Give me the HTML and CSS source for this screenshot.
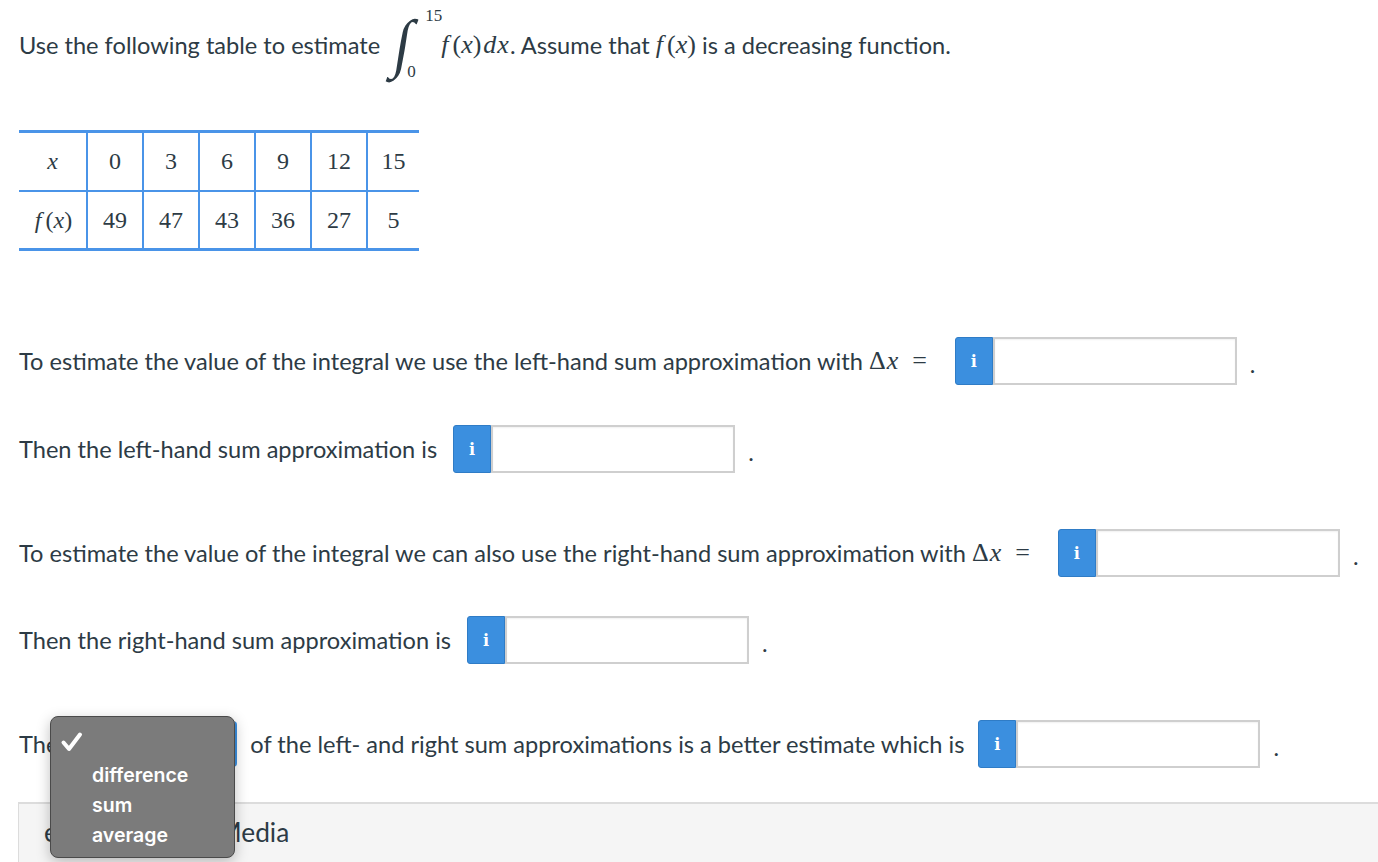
FILE: index.html
```html
<!DOCTYPE html>
<html>
<head>
<meta charset="utf-8">
<link rel="stylesheet" href="styles.css">
</head>
<body>
<div class="page">
  <div class="head">
    <span>Use the following table to estimate</span>
    <span class="intg">
      <span class="intsign">∫</span>
      <span class="up">15</span>
      <span class="lo">0</span>
    </span>
    <span class="m"><i class="fi">f</i>(<i>x</i>)<i class="d">dx</i></span><span>. Assume that</span><span class="m m2"><i class="fi">f</i>(<i>x</i>)</span><span>&nbsp;is a decreasing function.</span>
  </div>

  <table class="tbl">
    <tr><td class="c0"><i>x</i></td><td>0</td><td>3</td><td>6</td><td>9</td><td>12</td><td class="cl">15</td></tr>
    <tr><td class="c0"><i class="fi">f</i>(<i>x</i>)</td><td>49</td><td>47</td><td>43</td><td>36</td><td>27</td><td class="cl">5</td></tr>
  </table>

  <div class="row r1">
    <span>To estimate the value of the integral we use the left-hand sum approximation with</span><span class="m dx">Δ<i>x</i><span class="eq">=</span></span>
    <span class="ig"><span class="ib">i</span><span class="inp"></span></span><span class="dot">.</span>
  </div>
  <div class="row r2">
    <span>Then the left-hand sum approximation is</span>
    <span class="ig"><span class="ib">i</span><span class="inp"></span></span><span class="dot">.</span>
  </div>
  <div class="row r3">
    <span>To estimate the value of the integral we can also use the right-hand sum approximation with</span><span class="m dx">Δ<i>x</i><span class="eq">=</span></span>
    <span class="ig"><span class="ib">i</span><span class="inp"></span></span><span class="dot">.</span>
  </div>
  <div class="row r4">
    <span>Then the right-hand sum approximation is</span>
    <span class="ig"><span class="ib">i</span><span class="inp"></span></span><span class="dot">.</span>
  </div>
  <div class="row r5">
    <span>The</span>
    <span class="sel"></span>
    <span class="after">of the left- and right sum approximations is a better estimate which is</span>
    <span class="ig"><span class="ib">i</span><span class="inp"></span></span><span class="dot">.</span>
    <div class="menu">
      <svg class="check" width="24" height="22" viewBox="0 0 24 22"><path d="M3.5 11.5 L9 18 L20 3.5" fill="none" stroke="#fff" stroke-width="4" stroke-linecap="round" stroke-linejoin="round"/></svg>
      <div class="opt first">difference</div>
      <div class="opt">sum</div>
      <div class="opt">average</div>
    </div>
  </div>

  <div class="panel"><span class="ptxt">eTextbook and Media</span></div>
</div>
</body>
</html>
```

FILE: styles.css
```css
html, body {
  margin: 0;
  padding: 0;
  background: #fff;
}
body {
  font-family: Lato, "Open Sans", sans-serif;
  font-size: 23.6px;
  color: #2d3b45;
  overflow: hidden;
}
.page {
  padding-left: 19px;
  width: 1359px;
  height: 862px;
}
.head {
  display: flex;
  align-items: center;
  height: 90px;
  white-space: pre;
}
.m {
  font-family: "Liberation Serif", "Times New Roman", serif;
  font-size: 26px;
}
.m i { font-style: italic; }
.fi { padding-left: 2px; padding-right: 4px; }
.d { padding-left: 2px; letter-spacing: 1px; }
.intg {
  position: relative;
  display: inline-block;
  width: 57px;
  height: 90px;
  margin-left: 2px;
  font-family: "Liberation Serif", serif;
}
.intsign {
  position: absolute;
  left: 13px;
  top: 10px;
  font-size: 60px;
  line-height: 66px;
  display: inline-block;
  transform: scaleY(1.08) skewX(-10deg);
  transform-origin: center;
}
.up {
  position: absolute;
  left: 43px;
  top: 6px;
  font-size: 17px;
  line-height: 20px;
}
.lo {
  position: absolute;
  left: 25px;
  top: 62px;
  font-size: 17px;
  line-height: 20px;
}
.m2 { margin-left: 4px; }

.tbl {
  margin-top: 40px;
  border-collapse: collapse;
  font-family: "Liberation Serif", serif;
  font-size: 24px;
  color: #2d3b45;
  border-top: 3px solid #4a94e8;
  border-bottom: 3px solid #4a94e8;
}
.tbl tr:first-child td { height: 57px; border-bottom: 2px solid #4a94e8; }
.tbl tr:last-child td { height: 56px; }
.tbl td {
  padding: 0;
  text-align: center;
  width: 54px;
  border-right: 2px solid #4a94e8;
}
.tbl td.c0 { width: 67px; }
.tbl td.cl { width: 51px; border-right: none; }

.row {
  display: flex;
  align-items: center;
  height: 48px;
  white-space: pre;
  position: relative;
}
.r1 { margin-top: 86px; }
.r2 { margin-top: 40px; }
.r3 { margin-top: 56px; }
.r4 { margin-top: 39px; }
.r5 { margin-top: 56px; }
.dx { margin-left: 6px; font-size: 26px; }
.dx i { padding-left: 1px; }
.eq { margin-left: 14px; }
.ig {
  display: inline-flex;
  height: 48px;
  margin-left: 28px;
}
.ib {
  width: 36px;
  height: 46px;
  background: #3b8fdf;
  border: 1px solid #2f7cc6;
  border-radius: 3px 0 0 3px;
  color: #fff;
  font-family: "DejaVu Serif", serif;
  font-weight: bold;
  font-size: 16px;
  display: flex;
  align-items: center;
  justify-content: center;
}
.inp {
  width: 240px;
  height: 44px;
  border: 2px solid #cfcfcf;
  background: #fff;
  box-shadow: inset 0 1px 2px rgba(0,0,0,0.06);
}
.dot { margin-left: 13px; padding-top: 6px; }
.r2 .ig { margin-left: 16px; }
.r4 .ig { margin-left: 16px; }
.r5 .ig { margin-left: 14px; }

.sel {
  width: 177px;
  height: 46px;
  margin-left: 2px;
  border: 1px solid #9ab;
  border-right: 2px solid #3b8fdf;
  border-radius: 4px;
  background: #fff;
  box-sizing: border-box;
}
.after { margin-left: 13px; }
.menu {
  position: absolute;
  left: 31px;
  top: -4px;
  width: 183px;
  height: 140px;
  background: #7b7b7b;
  border: 1px solid #4a4a4a;
  border-radius: 8px;
  box-shadow: 0 4px 14px rgba(0,0,0,0.25);
  font-family: Inter, "Liberation Sans", sans-serif;
  font-weight: 600;
  font-size: 19.5px;
  color: #fff;
  z-index: 5;
  white-space: normal;
}
.check { position: absolute; left: 9px; top: 14px; }
.opt {
  padding-left: 41px;
  height: 30px;
  line-height: 30px;
}
.opt.first { margin-top: 43px; }

.panel {
  margin-top: 34px;
  height: 60px;
  background: #f5f5f5;
  border-top: 2px solid #dcdcdc;
  border-left: 1px solid #dcdcdc;
  display: flex;
  align-items: center;
  margin-left: -1px;
}
.ptxt {
  font-size: 26.3px;
  padding-left: 25px;
  padding-bottom: 4px;
}
```
